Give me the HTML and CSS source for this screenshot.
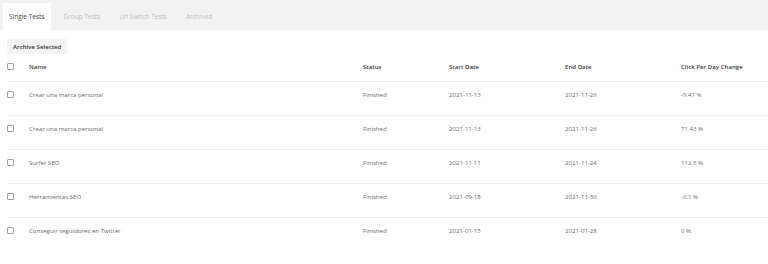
FILE: index.html
```
<html>
<head>
  <title>Tests</title>
  <link rel="stylesheet" href="styles.css">
</head>
<body>
  <div class="tabs">
    <div class="tab active">Single Tests</div>
    <div class="tab">Group Tests</div>
    <div class="tab">Url Switch Tests</div>
    <div class="tab">Archived</div>
  </div>

  <div class="content">
    <button class="archive-btn">Archive Selected</button>

    <div class="table">
      <div class="row head">
        <span class="check"></span>
        <span>Name</span>
        <span>Status</span>
        <span>Start Date</span>
        <span>End Date</span>
        <span>Click Per Day Change</span>
      </div>
      <div class="row">
        <span class="check"></span>
        <span>Crear una marca personal</span>
        <span>Finished</span>
        <span>2021-11-13</span>
        <span>2021-11-26</span>
        <span>-9.47 %</span>
      </div>
      <div class="row">
        <span class="check"></span>
        <span>Crear una marca personal</span>
        <span>Finished</span>
        <span>2021-11-13</span>
        <span>2021-11-26</span>
        <span>71.43 %</span>
      </div>
      <div class="row">
        <span class="check"></span>
        <span>Surfer SEO</span>
        <span>Finished</span>
        <span>2021-11-11</span>
        <span>2021-11-24</span>
        <span>112.5 %</span>
      </div>
      <div class="row">
        <span class="check"></span>
        <span>Herramientas SEO</span>
        <span>Finished</span>
        <span>2021-09-18</span>
        <span>2021-11-30</span>
        <span>-0.1 %</span>
      </div>
      <div class="row">
        <span class="check"></span>
        <span>Conseguir seguidores en Twitter</span>
        <span>Finished</span>
        <span>2021-01-15</span>
        <span>2021-01-28</span>
        <span>0 %</span>
      </div>
    </div>
  </div>
</body>
</html>
```

FILE: styles.css
```
body {
  font-family: "Open Sans", sans-serif;
  font-size: 6.1px;
  background-color: #ffffff;
  color: #6a6a6a;
  margin: 0;
  padding: 0;
}

.tabs {
  display: flex;
  gap: 6px;
  background-color: #f2f2f2;
  height: 30px;
  padding: 3px 0 0 3px;
  box-sizing: border-box;
  font-size: 6.5px;
}

.tab {
  padding: 0 7px 0 6px;
  line-height: 27px;
  color: #bdbdbd;
}

.tab.active {
  background-color: #ffffff;
  color: #444;
}

.content {
  padding: 9px 0 0 7px;
}

.archive-btn {
  font-family: "Open Sans", sans-serif;
  font-size: 6.1px;
  font-weight: 600;
  color: #333;
  background-color: #f4f4f4;
  border: none;
  height: 15px;
  padding: 0 6px;
  display: block;
}

.row {
  display: grid;
  grid-template-columns: 22px 334px 86px 116px 116px 1fr;
  align-items: start;
  height: 34px;
  padding-top: 8px;
  box-sizing: border-box;
  line-height: 9px;
  border-top: 1px solid #efefef;
}

.row.head {
  height: 27px;
  padding-top: 8px;
  border-top: none;
  font-weight: 600;
  color: #3a3a3a;
}

.check {
  width: 5px;
  height: 5px;
  margin-top: 1px;
  border: 1px solid #a0a0a0;
  border-radius: 1px;
}
```
